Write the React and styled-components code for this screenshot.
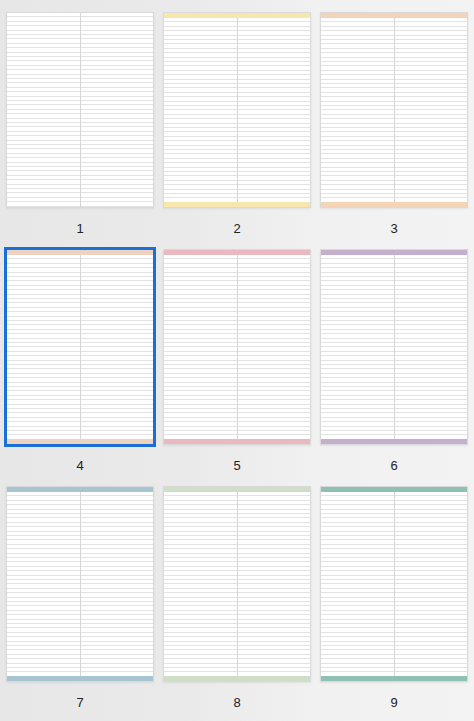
import React from "react";
import styled, { createGlobalStyle } from "styled-components";

const GlobalStyle = createGlobalStyle`
  html, body {
    margin: 0;
    padding: 0;
  }
  body {
    font-family: "Liberation Sans", Arial, sans-serif;
    background: linear-gradient(90deg, #e7e7e7 0%, #eaeaea 40%, #f1f1f1 68%, #f3f3f3 100%);
    min-height: 721px;
  }
`;

const Grid = styled.div`
  display: grid;
  grid-template-columns: repeat(3, 148px);
  column-gap: 9px;
  padding: 12px 0 0 6px;
`;

const Cell = styled.div`
  display: flex;
  flex-direction: column;
`;

const Page = styled.div`
  height: 196px;
  box-sizing: border-box;
  background-color: #fff;
  border: 1px solid #d9d9d9;
  box-shadow: 0 1px 2px rgba(0, 0, 0, 0.07);
  display: flex;
  flex-direction: column;
  outline: ${(p) => (p.selected ? "3px solid #1b6fd9" : "none")};
  outline-offset: -1px;
`;

const Band = styled.div`
  height: ${(p) => (p.color ? "5px" : "0")};
  flex: none;
  background-color: ${(p) => p.color || "transparent"};
`;

const Lines = styled.div`
  flex: 1;
  position: relative;
  background-image: repeating-linear-gradient(
    180deg,
    #fff 0px,
    #fff 3.4px,
    #e3e3e3 3.4px,
    #e3e3e3 4.4px
  );

  &::after {
    content: "";
    position: absolute;
    top: 0;
    bottom: 0;
    left: 50%;
    width: 1px;
    background-color: #d6d6d6;
  }
`;

const Label = styled.div`
  height: 41px;
  line-height: 41px;
  text-align: center;
  font-size: 13px;
  color: #222;
`;

const pages = [
  { n: 1 },
  { n: 2, color: "#f7e7ac" },
  { n: 3, color: "#f4d4b7" },
  { n: 4, color: "#ecd3c2", selected: true },
  { n: 5, color: "#e9b9c2" },
  { n: 6, color: "#c4afcc" },
  { n: 7, color: "#a7c4d1" },
  { n: 8, color: "#d0ddc7" },
  { n: 9, color: "#90c0b4" },
];

export default function App() {
  return (
    <>
      <GlobalStyle />
      <Grid>
        {pages.map((p) => (
          <Cell key={p.n}>
            <Page selected={p.selected}>
              <Band color={p.color} />
              <Lines />
              <Band color={p.color} />
            </Page>
            <Label>{p.n}</Label>
          </Cell>
        ))}
      </Grid>
    </>
  );
}
